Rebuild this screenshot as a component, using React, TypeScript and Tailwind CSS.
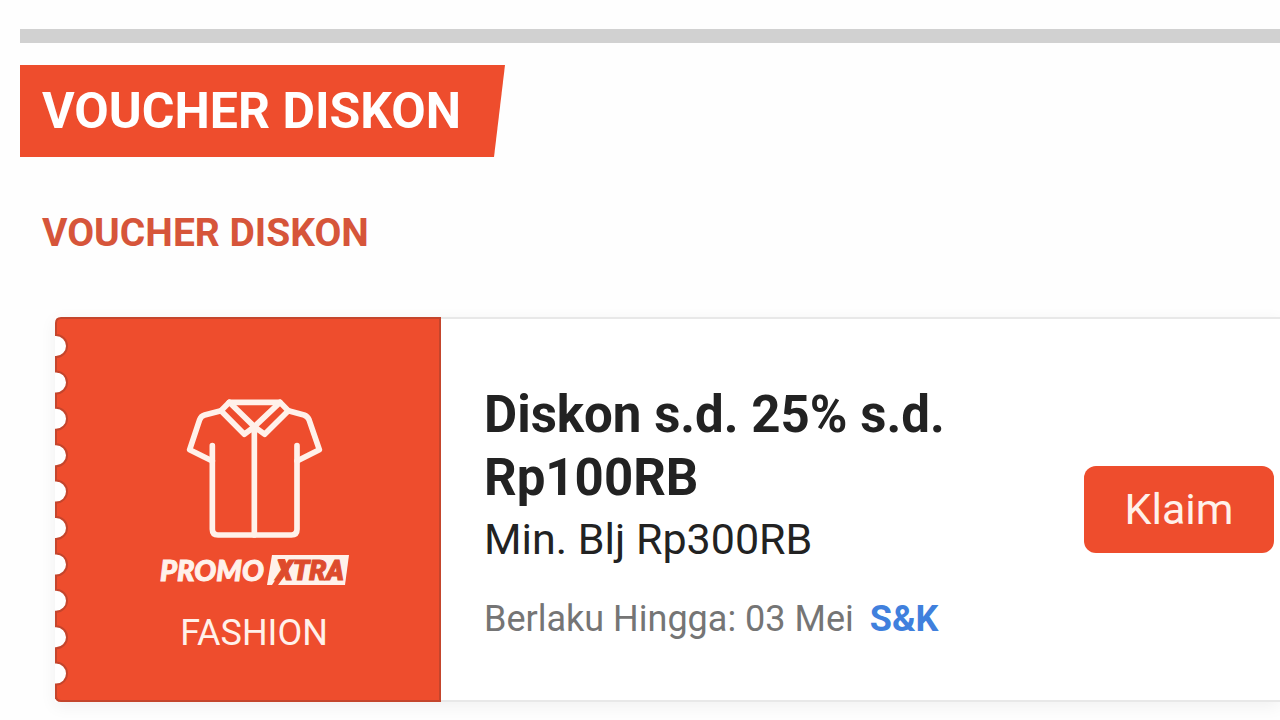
interface VoucherProps {
  category: string;
  title: string;
  minSpend: string;
  validUntil: string;
}

const ShirtIcon = () => (
  <svg
    viewBox="48 49 417 432"
    className="h-36 w-[139px]"
    fill="none"
    stroke="#fff1ea"
    strokeWidth="17"
    strokeLinejoin="round"
    strokeLinecap="round"
    aria-hidden="true"
  >
    <path d="M130 195V446Q130 463 147 463H367Q384 463 384 446V195" />
    <path d="M130 241L62 207L92 117Q96 106 107 103L156 90L181 65H333L358 90L405 103Q416 107 420 117L451 207L384 241" />
    <path d="M181 65L256 138L333 65M156 90L226 161L256 138L287 161L358 90M256 138V463" />
  </svg>
);

const PromoXtraLogo = () => (
  <svg viewBox="0 -4 192 42" className="h-[42px] w-48" role="img" aria-label="PROMO XTRA">
    <text
      x="2"
      y="28"
      fill="#fff1ea"
      stroke="#fff1ea"
      strokeWidth="1"
      fontFamily="Lato, sans-serif"
      fontSize="29"
      fontWeight="900"
      fontStyle="italic"
    >
      PROMO
    </text>
    <path d="M114 2H191L187 32H109Z" fill="#fff1ea" />
    <path d="M120 6L124 17L114 32H120L131 17L127 6Z" fill="#ee4d2d" />
    <text
      x="118"
      y="27"
      fill="#dd4b2d"
      stroke="#dd4b2d"
      strokeWidth="1"
      fontFamily="Roboto, sans-serif"
      fontSize="27"
      fontWeight="900"
      fontStyle="italic"
    >
      XTRA
    </text>
  </svg>
);

const notches = Array.from({ length: 10 }, () => "a11 11 0 0 1 0 22v14.4").join("");
const edge = `M14 1H6Q1 1 1 6V18${notches}V379Q1 384 6 384H14`;

const TicketEdge = () => (
  <svg viewBox="0 0 14 385" preserveAspectRatio="none" className="h-full w-3.5 shrink-0" aria-hidden="true">
    <path d={edge} fill="#ee4d2d" stroke="#c4452c" strokeWidth="2" />
  </svg>
);

const Voucher = ({ category, title, minSpend, validUntil }: VoucherProps) => (
  <article className="flex h-[385px] bg-white shadow-[0_4px_16px_rgba(0,0,0,0.06)]">
    <TicketEdge />
    <div className="flex w-[372px] shrink-0 flex-col items-center border-y-2 border-r-2 border-[#c4452c] bg-[#ee4d2d] pt-[78px]">
      <ShirtIcon />
      <div className="mt-2">
        <PromoXtraLogo />
      </div>
      <p className="mt-5 text-[36px] leading-[44px] text-[#fff1ea]">{category}</p>
    </div>
    <div className="flex grow items-center justify-between border-y-2 border-[#e8e8e8] pr-1.5 pl-[43px]">
      <div className="w-[480px] pt-3">
        <h3 className="text-[51px] leading-[63px] font-bold text-[#222222]">{title}</h3>
        <p className="text-[43px] leading-[60px] text-[#222222]">{minSpend}</p>
        <p className="mt-5 flex items-baseline gap-4 text-[36px] leading-[60px] whitespace-nowrap text-[#757575]">
          {validUntil}
          <a href="#terms" className="font-bold text-[#4080dd]">
            S&amp;K
          </a>
        </p>
      </div>
      <button type="button" className="h-[87px] w-[190px] shrink-0 rounded-xl bg-[#ee4d2d] text-[43px] text-[#fff1ea]">
        Klaim
      </button>
    </div>
  </article>
);

const App = () => {
  return (
    <main className="overflow-hidden bg-[#fefefe] pt-[29px] pb-[18px] pl-5 font-['Roboto',sans-serif]">
      <div className="h-3.5 bg-[#d1d1d1]" />

      {/* Section banner */}
      <h1 className="mt-[22px] flex h-[92px] w-[485px] items-center bg-[#ee4d2d] pl-[22px] text-[50px] font-bold whitespace-nowrap text-white [clip-path:polygon(0_0,100%_0,calc(100%-11px)_100%,0_100%)]">
        VOUCHER DISKON
      </h1>

      <h2 className="mt-[51px] pl-[22px] text-[39px] leading-[50px] font-bold text-[#d6553a]">VOUCHER DISKON</h2>

      <div className="mt-[59px] pl-[35px]">
        <Voucher
          category="FASHION"
          title="Diskon s.d. 25% s.d. Rp100RB"
          minSpend="Min. Blj Rp300RB"
          validUntil="Berlaku Hingga: 03 Mei"
        />
      </div>
    </main>
  );
};

export default App;
